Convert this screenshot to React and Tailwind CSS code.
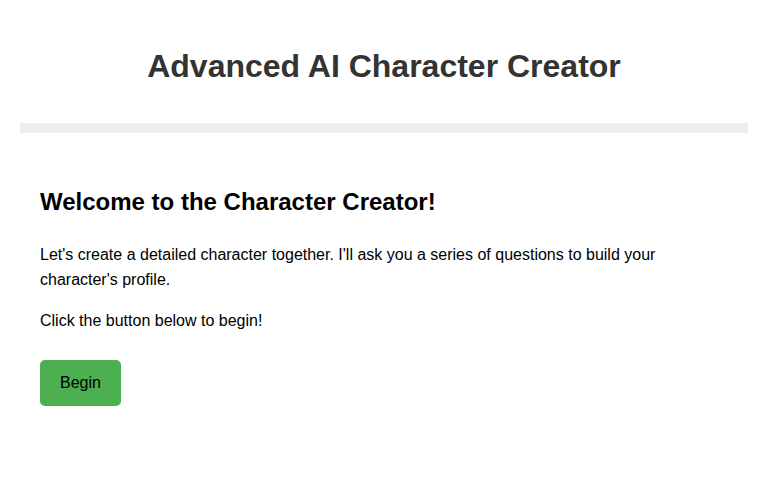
export default function App() {
  return (
    <div className="min-h-screen bg-white p-5 font-['Liberation_Sans',Arial,sans-serif] leading-[1.6] text-[#333]">
      {/* Header */}
      <h1 className="mt-[21px] mb-[31px] text-center text-[32px] font-bold leading-[1.6] text-[#333]">
        Advanced AI Character Creator
      </h1>

      {/* Progress bar */}
      <div className="h-[10px] w-full bg-[#eee]">
        <div className="h-full w-0 bg-[#4caf50]" />
      </div>

      {/* Intro */}
      <div className="px-5 pt-[50px]">
        <h2 className="mb-5 text-2xl font-bold leading-[1.6] text-black">
          Welcome to the Character Creator!
        </h2>
        <p className="mb-[15px] max-w-[640px] text-base leading-[1.6] text-black">
          Let's create a detailed character together. I'll ask you a series of questions to build your character's profile.
        </p>
        <p className="mb-4 text-base leading-[1.6] text-black">Click the button below to begin!</p>
        <button className="mt-[11px] rounded-[5px] bg-[#4caf50] px-5 py-[10px] text-base leading-[1.6] text-black">
          Begin
        </button>
      </div>
    </div>
  );
}
